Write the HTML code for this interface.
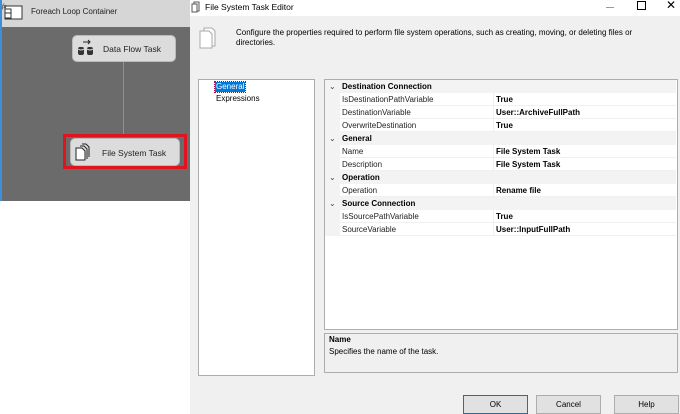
<!DOCTYPE html>
<html><head><style>
*{margin:0;padding:0;box-sizing:border-box}
body{width:680px;height:414px;overflow:hidden;background:#fff;font-family:"Liberation Sans",sans-serif;font-size:8px;color:#000;position:relative}
.a{position:absolute}
.row{position:absolute;left:340px;width:336px;height:13px;line-height:13px;font-size:8px}
.cat{background:#f3f3f3;font-weight:bold;padding-left:2px}
.prop{background:#fff;border-bottom:1px solid #f0f0f0}
.prop .n{position:absolute;left:2px;top:0;color:#222}
.prop .v{position:absolute;left:156px;top:0;font-weight:bold}
.prop:after{content:"";position:absolute;left:153px;top:0;width:1px;height:13px;background:#f0f0f0}
.chev{position:absolute;left:329px;font-size:8px;color:#444;line-height:13px;height:13px}
.btn{position:absolute;top:395px;width:65px;height:19px;background:#e1e1e1;border:1px solid #adadad;text-align:center;line-height:17px;font-size:8px}
</style></head><body>
<div class="a" style="left:0;top:0;width:190px;height:27px;background:#d6d6d6"></div>
<div class="a" style="left:0;top:27px;width:190px;height:174px;background:#6b6b6b"></div>
<div class="a" style="left:0;top:0;width:2px;height:201px;background:#3c8fd8"></div>
<svg class="a" style="left:2px;top:2px" width="22" height="20" viewBox="0 0 22 20"><rect x="3" y="4" width="17" height="13" fill="#fff" stroke="#333"/><rect x="3" y="7" width="6" height="4" fill="#fff" stroke="#333"/><rect x="3" y="11" width="6" height="5" fill="#fff" stroke="#333"/><text x="0" y="6" font-size="6" font-style="italic" font-family="Liberation Serif">fx</text></svg>
<div class="a" style="left:31px;top:7px;font-size:8px;color:#222">Foreach Loop Container</div>
<div class="a" style="left:72px;top:35px;width:104px;height:27px;background:#dcdcdc;border-radius:5px;border:1px solid #bbb"></div>
<svg class="a" style="left:76px;top:39px" width="20" height="18" viewBox="0 0 20 18"><path d="M7 3h7m-2-2l2 2-2 2" stroke="#222" fill="none"/><rect x="2" y="8" width="6" height="8" rx="2" fill="#333"/><rect x="11" y="8" width="6" height="8" rx="2" fill="#333"/><path d="M2 10q3 2 6 0M11 10q3 2 6 0" stroke="#ddd" fill="none"/></svg>
<div class="a" style="left:103px;top:44px;font-size:8.5px;color:#222">Data Flow Task</div>
<div class="a" style="left:123px;top:62px;width:1px;height:74px;background:#4ec04e"></div>
<div class="a" style="left:63px;top:134px;width:124px;height:35px;border:3px solid #e0141e"></div>
<div class="a" style="left:70px;top:138px;width:110px;height:28px;background:#dcdcdc;border-radius:5px;border:1px solid #bbb"></div>
<svg class="a" style="left:74px;top:142px" width="18" height="20" viewBox="0 0 18 20"><path d="M8 2h4l3 3v10M6 4h4l3 3v10" fill="none" stroke="#222"/><path d="M2 6h6l3 3v9H2z" fill="#fff" stroke="#222"/></svg>
<div class="a" style="left:102px;top:148px;font-size:8.5px;color:#222">File System Task</div>
<div class="a" style="left:190px;top:0;width:490px;height:414px;background:#f0f0f0"></div>
<div class="a" style="left:190px;top:0;width:490px;height:16px;background:#fff"></div>
<svg class="a" style="left:191px;top:1px" width="10" height="12"><path d="M3 1h5v9H3z" fill="#fff" stroke="#555"/><path d="M1 3h5v8H1z" fill="#fff" stroke="#555"/></svg>
<div class="a" style="left:205px;top:2px;font-size:8.5px">File System Task Editor</div>
<div class="a" style="left:606px;top:7px;width:8px;height:1px;background:#999"></div>
<div class="a" style="left:637px;top:1px;width:9px;height:9px;border:1px solid #000"></div>
<div class="a" style="left:666px;top:-2px;font-size:12px">✕</div>
<svg class="a" style="left:198px;top:26px" width="20" height="24"><path d="M6 2h8l3 3v15H6z" fill="#fafafa" stroke="#aaa"/><path d="M2 5h9l3 3v14H2z" fill="#fff" stroke="#aaa"/></svg>
<div class="a" style="left:236px;top:28px;width:430px;font-size:8px;line-height:10px">Configure the properties required to perform file system operations, such as creating, moving, or deleting files or directories.</div>
<div class="a" style="left:198px;top:79px;width:117px;height:297px;background:#fff;border:1px solid #adadad"></div>
<div class="a" style="left:215px;top:82px;background:#0078d7;color:#fff;padding:0 1px;font-size:8px;line-height:10px;outline:1px dotted #a05">General</div>
<div class="a" style="left:216px;top:94px;font-size:8px">Expressions</div>
<div class="a" style="left:324px;top:79px;width:354px;height:251px;background:#fff;border:1px solid #adadad"></div>
<div class="a" style="left:325px;top:80px;width:15px;height:156px;background:#f3f3f3"></div>
<div class="row cat" style="top:80px">Destination Connection</div><div class="chev" style="top:80px">⌄</div>
<div class="row prop" style="top:93px"><span class="n">IsDestinationPathVariable</span><span class="v">True</span></div>
<div class="row prop" style="top:106px"><span class="n">DestinationVariable</span><span class="v">User::ArchiveFullPath</span></div>
<div class="row prop" style="top:119px"><span class="n">OverwriteDestination</span><span class="v">True</span></div>
<div class="row cat" style="top:132px">General</div><div class="chev" style="top:132px">⌄</div>
<div class="row prop" style="top:145px"><span class="n">Name</span><span class="v">File System Task</span></div>
<div class="row prop" style="top:158px"><span class="n">Description</span><span class="v">File System Task</span></div>
<div class="row cat" style="top:171px">Operation</div><div class="chev" style="top:171px">⌄</div>
<div class="row prop" style="top:184px"><span class="n">Operation</span><span class="v">Rename file</span></div>
<div class="row cat" style="top:197px">Source Connection</div><div class="chev" style="top:197px">⌄</div>
<div class="row prop" style="top:210px"><span class="n">IsSourcePathVariable</span><span class="v">True</span></div>
<div class="row prop" style="top:223px"><span class="n">SourceVariable</span><span class="v">User::InputFullPath</span></div>
<div class="a" style="left:324px;top:333px;width:354px;height:40px;border:1px solid #adadad;background:#f0f0f0"></div>
<div class="a" style="left:329px;top:335px;font-weight:bold;font-size:8px">Name</div>
<div class="a" style="left:329px;top:347px;font-size:8px">Specifies the name of the task.</div>
<div class="btn" style="left:463px;border:1px solid #0078d7">OK</div>
<div class="btn" style="left:536px">Cancel</div>
<div class="btn" style="left:614px">Help</div>
</body></html>
